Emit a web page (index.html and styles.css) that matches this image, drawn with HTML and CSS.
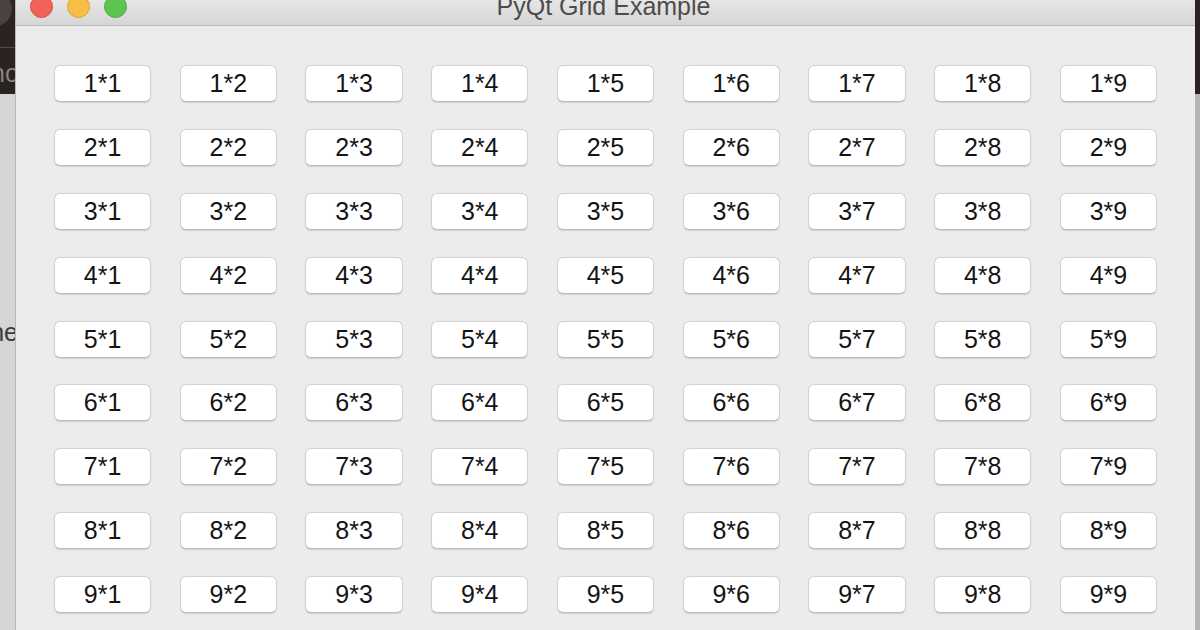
FILE: index.html
```html
<!DOCTYPE html>
<html>
<head>
<meta charset="utf-8">
<link rel="stylesheet" href="styles.css">
</head>
<body>
<div class="screen">
  <div class="side side-left">
    <div class="side-dark">
      <div class="side-circle"></div>
      <div class="side-line"></div>
      <div class="side-text light">no</div>
    </div>
    <div class="side-gray">
      <div class="side-text dark">ne</div>
    </div>
  </div>
  <div class="window">
    <div class="titlebar">
      <div class="lights">
        <span class="light red"></span>
        <span class="light yellow"></span>
        <span class="light green"></span>
      </div>
      <div class="title">PyQt Grid Example</div>
    </div>
    <div class="content">
      <div class="grid" id="grid"></div>
    </div>
  </div>
  <div class="side side-right">
    <div class="side-dark"></div>
    <div class="side-gray right-gray"></div>
  </div>
</div>
<script src="app.js"></script>
</body>
</html>
```
FILE: app.js
```js
var g = document.getElementById('grid');
for (var r = 1; r <= 9; r++) {
  for (var c = 1; c <= 9; c++) {
    var b = document.createElement('button');
    b.className = 'btn';
    b.textContent = r + '*' + c;
    g.appendChild(b);
  }
}
```
FILE: styles.css
```css
html, body {
  margin: 0;
  padding: 0;
}
body {
  width: 1200px;
  height: 630px;
  overflow: hidden;
  font-family: "Liberation Sans", Arial, sans-serif;
}
.screen {
  display: flex;
  width: 1200px;
  height: 630px;
}
.side {
  display: flex;
  flex-direction: column;
  overflow: hidden;
  position: relative;
}
.side-left {
  width: 15px;
}
.side-right {
  width: 5px;
}
.side-dark {
  height: 94px;
  background: #2b2222;
  position: relative;
  flex: none;
}
.side-gray {
  flex: 1;
  background: #d5d5d5;
  position: relative;
}
.right-gray {
  background: #b4b4b4;
}
.side-circle {
  position: absolute;
  left: -22px;
  top: -8px;
  width: 34px;
  height: 34px;
  border-radius: 50%;
  background: #4a4242;
}
.side-line {
  position: absolute;
  left: 0;
  right: 0;
  top: 47px;
  height: 1px;
  background: #554a4a;
}
.side-text {
  position: absolute;
  right: 0;
  font-size: 25px;
  white-space: nowrap;
  line-height: 1;
}
.side-text.light {
  top: 61px;
  color: #8a8282;
  right: 1px;
}
.side-text.dark {
  top: 226px;
  color: #3a3a3a;
  right: -3px;
}
.window {
  width: 1180px;
  flex: none;
  background: #ececec;
  display: flex;
  flex-direction: column;
  border-left: 1px solid #b8b8b8;
  box-sizing: border-box;
}
.titlebar {
  height: 26px;
  flex: none;
  box-sizing: border-box;
  border-bottom: 1px solid #b9b9b9;
  background: linear-gradient(#e6e6e6, #d6d6d6);
  position: relative;
  overflow: hidden;
  display: flex;
  justify-content: center;
}
.lights {
  position: absolute;
  left: 14px;
  top: -5px;
  display: flex;
  gap: 14px;
}
.light {
  width: 23px;
  height: 23px;
  border-radius: 50%;
  box-sizing: border-box;
}
.red {
  background: #f0625a;
  border: 1px solid #dc4e46;
}
.yellow {
  background: #f8bd45;
  border: 1px solid #dea233;
}
.green {
  background: #5cc54f;
  border: 1px solid #4aab3e;
}
.title {
  font-family: "Liberation Sans", Arial, sans-serif;
  font-size: 25px;
  color: #4c4c4c;
  line-height: 1;
  margin-top: -6px;
  margin-left: -4px;
}
.content {
  flex: 1;
  padding: 39px 38px 0 38px;
}
.grid {
  display: grid;
  grid-template-columns: repeat(9, 1fr);
  column-gap: 28.6px;
  row-gap: 26.9px;
}
.btn {
  height: 37px;
  margin: 0;
  padding: 0;
  background: #ffffff;
  border: 1px solid #d2d2d2;
  border-bottom-color: #bdbdbd;
  border-radius: 6px;
  box-shadow: 0 1px 1px rgba(0, 0, 0, 0.12);
  font-family: "Liberation Sans", Arial, sans-serif;
  font-size: 25px;
  color: #141414;
  line-height: 1;
  text-align: center;
}
```
